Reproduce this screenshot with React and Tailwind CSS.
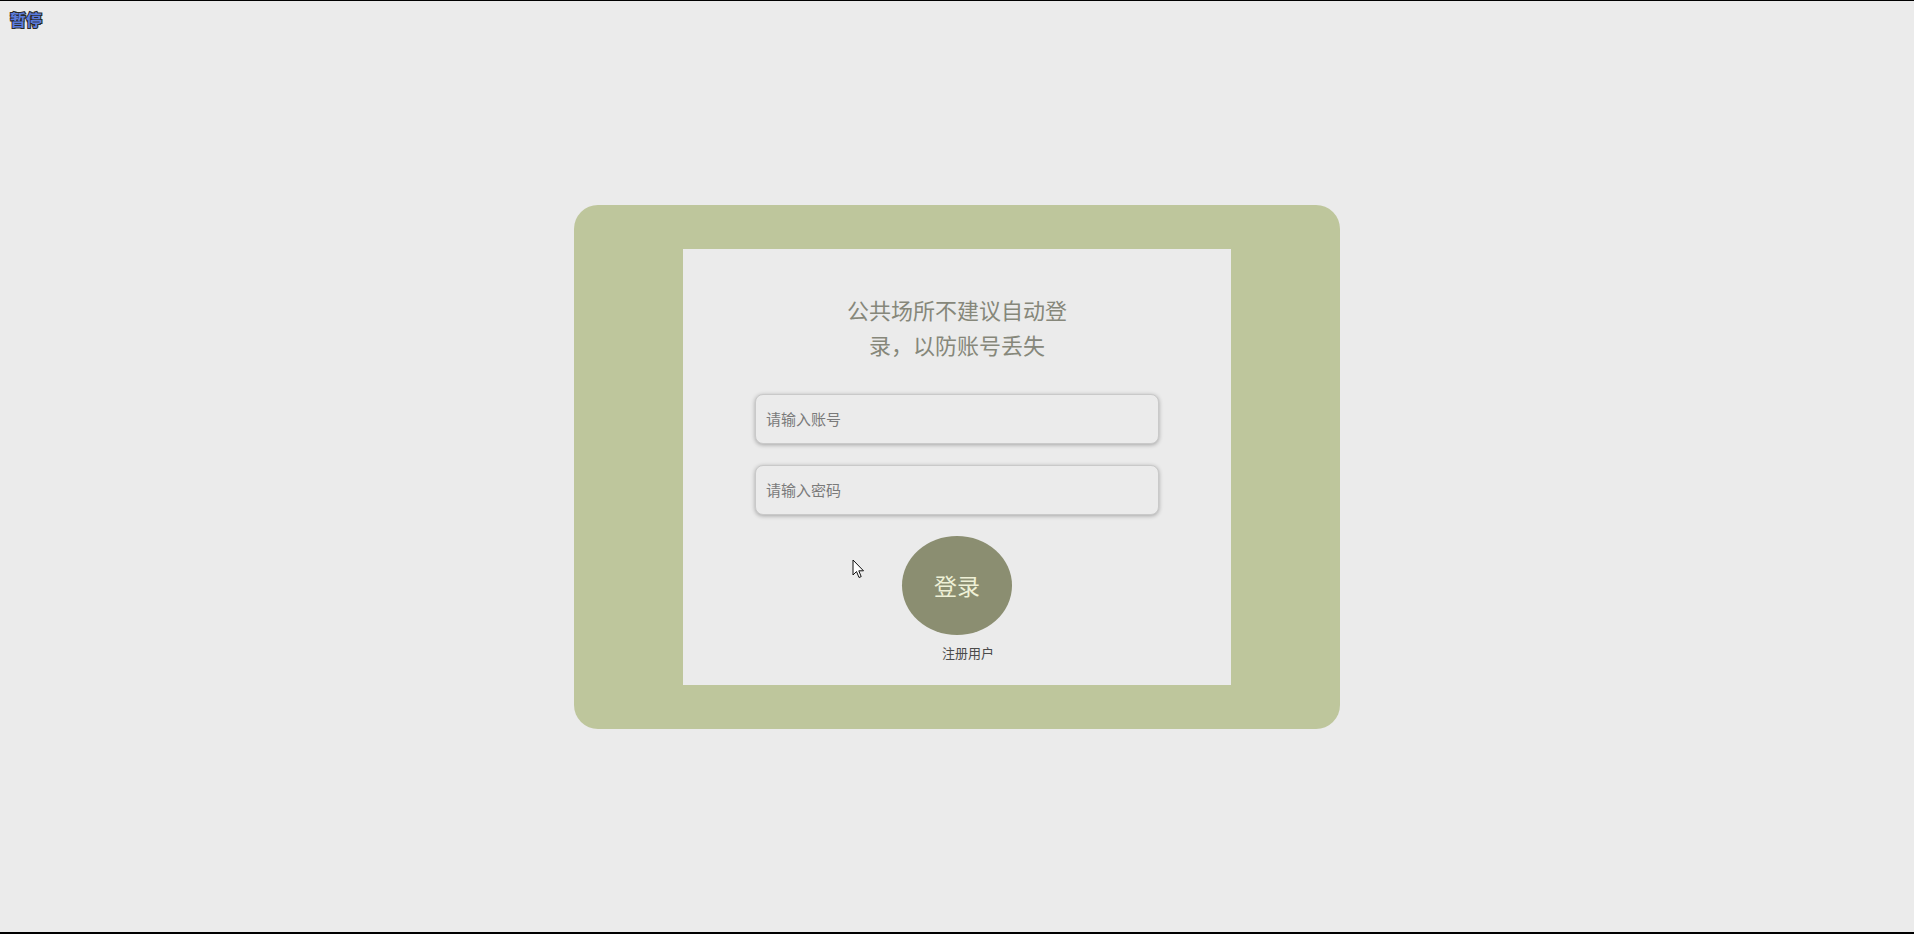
import React from "react";

const cjk = { fontFamily: '"Noto Sans CJK SC", "Noto Sans", sans-serif' };

export default function App() {
  return (
    <div
      className="relative h-[934px] w-full box-border border-t border-b-2 border-black bg-[#ebebeb] flex items-center justify-center overflow-hidden"
      style={cjk}
    >
      <div className="absolute left-[10px] top-[7px] text-[16px] font-bold leading-[22px] text-[#5b7bdc] [-webkit-text-stroke:2px_#2a2a2a] [paint-order:stroke_fill]">
        暂停
      </div>

      <div className="w-[766px] h-[524px] rounded-[24px] bg-[#bec69c] flex items-center justify-center">
        <div className="w-[548px] h-[436px] bg-[#ebebeb] flex flex-col items-center pt-[43px]">
          <div className="w-[240px] text-center text-[22px] leading-[35px] text-[#86877a]">
            公共场所不建议自动登录，以防账号丢失
          </div>
          <input
            className="mt-[32px] w-[404px] h-[50px] shrink-0 rounded-[8px] border border-[#c9c9c9] bg-[#ebebeb] pl-[10px] text-[15px] text-[#555] placeholder:text-[#7a7a7a] shadow-[0_1px_4px_rgba(0,0,0,0.3)] outline-none"
            placeholder="请输入账号"
          />
          <input
            type="password"
            className="mt-[21px] w-[404px] h-[50px] shrink-0 rounded-[8px] border border-[#c9c9c9] bg-[#ebebeb] pl-[10px] text-[15px] text-[#555] placeholder:text-[#7a7a7a] shadow-[0_1px_4px_rgba(0,0,0,0.3)] outline-none"
            placeholder="请输入密码"
          />
          <button className="mt-[21px] w-[110px] h-[99px] shrink-0 rounded-[50%] bg-[#8b8e71] text-[23px] text-[#eef0d6] flex items-center justify-center">
            登录
          </button>
          <div className="mt-[8px] ml-[22px] text-[13px] leading-[20px] text-[#4a4a4a]">注册用户</div>
        </div>
      </div>

      <svg
        className="absolute left-[852px] top-[558px]"
        width="13"
        height="20"
        viewBox="0 0 13 20"
      >
        <path d="M1 1 L1 16 L4.5 12.5 L7 18.5 L9.2 17.6 L6.8 11.8 L11.5 11.8 Z" fill="#fff" stroke="#111" strokeWidth="1" strokeLinejoin="round" />
      </svg>
    </div>
  );
}
